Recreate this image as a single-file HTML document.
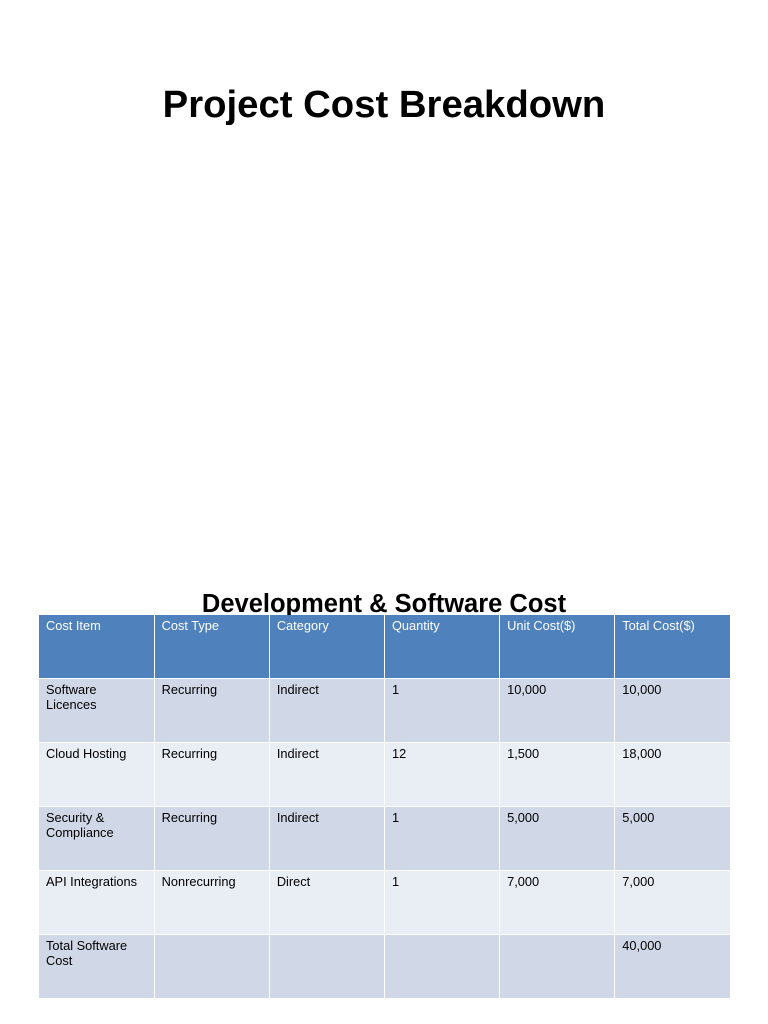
<!DOCTYPE html>
<html><head><meta charset="utf-8"><style>
body{margin:0;width:768px;height:1024px;background:#fff;position:relative;font-family:"Liberation Sans",sans-serif;overflow:hidden}
h1{position:absolute;top:83px;left:0;width:768px;text-align:center;margin:0;font-size:38.3px;font-weight:bold;line-height:44px}
h2{position:absolute;top:589px;left:0;width:768px;text-align:center;margin:0;font-size:25.5px;font-weight:bold;line-height:30px}
table{position:absolute;left:39px;top:615px;border-collapse:collapse;table-layout:fixed;width:691px}
td{width:115px;height:64px;border:1px solid #fff;vertical-align:top;padding:3px 7px;font-size:12.8px;line-height:15px;box-sizing:border-box;color:#000}
tr:first-child td{background:#4f81bd;color:#fff;border-top:none;height:63px}
tr:nth-child(even) td{background:#d0d8e8}
tr:nth-child(odd):not(:first-child) td{background:#e9edf4}
td:first-child{border-left:none}td:last-child{border-right:none}
</style></head><body>
<h1>Project Cost Breakdown</h1>
<h2>Development &amp; Software Cost</h2>
<table>
<tr><td>Cost Item</td><td>Cost Type</td><td>Category</td><td>Quantity</td><td>Unit Cost($)</td><td>Total Cost($)</td></tr>
<tr><td>Software Licences</td><td>Recurring</td><td>Indirect</td><td>1</td><td>10,000</td><td>10,000</td></tr>
<tr><td>Cloud Hosting</td><td>Recurring</td><td>Indirect</td><td>12</td><td>1,500</td><td>18,000</td></tr>
<tr><td>Security &amp; Compliance</td><td>Recurring</td><td>Indirect</td><td>1</td><td>5,000</td><td>5,000</td></tr>
<tr><td>API Integrations</td><td>Nonrecurring</td><td>Direct</td><td>1</td><td>7,000</td><td>7,000</td></tr>
<tr><td>Total Software Cost</td><td></td><td></td><td></td><td></td><td>40,000</td></tr>
</table>
</body></html>
